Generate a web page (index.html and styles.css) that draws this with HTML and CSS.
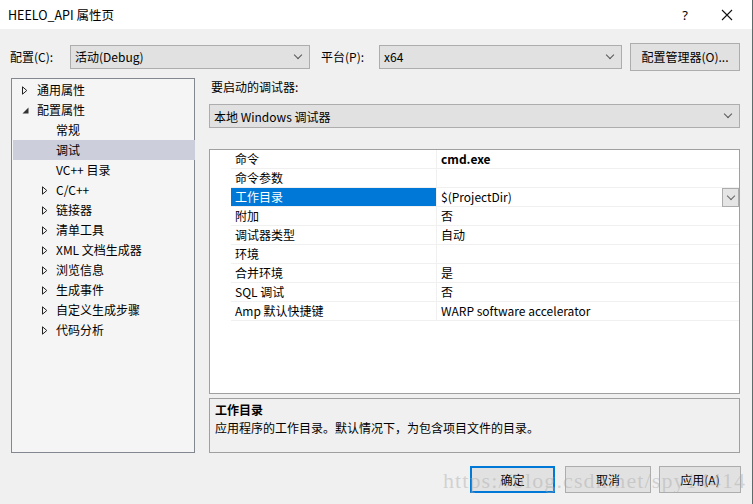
FILE: index.html
```html
<!DOCTYPE html>
<html lang="zh-CN">
<head>
    <meta charset="UTF-8">
    <title>HEELO_API 属性页</title>
    <link rel="stylesheet" href="styles.css">
</head>
<body>
<div class="dialog">
    <div class="titlebar">
        <span class="title">HEELO_API 属性页</span>
        <span class="help">?</span>
        <svg class="close" width="12" height="12" viewBox="0 0 12 12"><path d="M1 1 L11 11 M11 1 L1 11" stroke="#111" stroke-width="1.1" fill="none"/></svg>
    </div>

    <div class="config-row">
        <span class="lbl">配置(C):</span>
        <div class="combo combo-config"><span>活动(Debug)</span><i class="chev"></i></div>
        <span class="lbl lbl-plat">平台(P):</span>
        <div class="combo combo-plat"><span>x64</span><i class="chev"></i></div>
        <button class="btn btn-manager">配置管理器(O)...</button>
    </div>

    <div class="main">
        <div class="tree">
            <div class="node"><svg class="tri" width="6" height="9" viewBox="0 0 6 9"><path d="M0.5 0.8 L4.8 4.5 L0.5 8.2 Z" fill="none" stroke="#222"/></svg>通用属性</div>
            <div class="node"><svg class="tri" width="7" height="9" viewBox="0 0 7 9"><path d="M6.5 1.5 L6.5 7.5 L0.5 7.5 Z" fill="#333"/></svg>配置属性</div>
            <div class="node sub">常规</div>
            <div class="node sub selected">调试</div>
            <div class="node sub">VC++ 目录</div>
            <div class="node sub"><svg class="tri" width="6" height="9" viewBox="0 0 6 9"><path d="M0.5 0.8 L4.8 4.5 L0.5 8.2 Z" fill="none" stroke="#222"/></svg>C/C++</div>
            <div class="node sub"><svg class="tri" width="6" height="9" viewBox="0 0 6 9"><path d="M0.5 0.8 L4.8 4.5 L0.5 8.2 Z" fill="none" stroke="#222"/></svg>链接器</div>
            <div class="node sub"><svg class="tri" width="6" height="9" viewBox="0 0 6 9"><path d="M0.5 0.8 L4.8 4.5 L0.5 8.2 Z" fill="none" stroke="#222"/></svg>清单工具</div>
            <div class="node sub"><svg class="tri" width="6" height="9" viewBox="0 0 6 9"><path d="M0.5 0.8 L4.8 4.5 L0.5 8.2 Z" fill="none" stroke="#222"/></svg>XML 文档生成器</div>
            <div class="node sub"><svg class="tri" width="6" height="9" viewBox="0 0 6 9"><path d="M0.5 0.8 L4.8 4.5 L0.5 8.2 Z" fill="none" stroke="#222"/></svg>浏览信息</div>
            <div class="node sub"><svg class="tri" width="6" height="9" viewBox="0 0 6 9"><path d="M0.5 0.8 L4.8 4.5 L0.5 8.2 Z" fill="none" stroke="#222"/></svg>生成事件</div>
            <div class="node sub"><svg class="tri" width="6" height="9" viewBox="0 0 6 9"><path d="M0.5 0.8 L4.8 4.5 L0.5 8.2 Z" fill="none" stroke="#222"/></svg>自定义生成步骤</div>
            <div class="node sub"><svg class="tri" width="6" height="9" viewBox="0 0 6 9"><path d="M0.5 0.8 L4.8 4.5 L0.5 8.2 Z" fill="none" stroke="#222"/></svg>代码分析</div>
        </div>

        <div class="right">
            <div class="dbg-label">要启动的调试器:</div>
            <div class="combo combo-dbg"><span>本地 Windows 调试器</span><i class="chev"></i></div>

            <div class="grid">
                <div class="row"><div class="name">命令</div><div class="val bold">cmd.exe</div></div>
                <div class="row"><div class="name">命令参数</div><div class="val"></div></div>
                <div class="row active"><div class="name">工作目录</div><div class="val">$(ProjectDir)<span class="drop"><i class="chev"></i></span></div></div>
                <div class="row"><div class="name">附加</div><div class="val">否</div></div>
                <div class="row"><div class="name">调试器类型</div><div class="val">自动</div></div>
                <div class="row"><div class="name">环境</div><div class="val"></div></div>
                <div class="row"><div class="name">合并环境</div><div class="val">是</div></div>
                <div class="row"><div class="name">SQL 调试</div><div class="val">否</div></div>
                <div class="row"><div class="name">Amp 默认快捷键</div><div class="val">WARP software accelerator</div></div>
            </div>

            <div class="desc">
                <div class="desc-title">工作目录</div>
                <div class="desc-text">应用程序的工作目录。默认情况下，为包含项目文件的目录。</div>
            </div>
        </div>
    </div>

    <div class="buttons">
        <button class="btn btn-default">确定</button>
        <button class="btn btn-cancel">取消</button>
        <button class="btn btn-apply">应用(A)</button>
    </div>

    <div class="watermark">https://blog.csdn.net/spy14414</div>
</div>
</body>
</html>
```

FILE: styles.css
```css
body {
    margin: 0;
    font-family: "Noto Sans CJK SC", "Noto Sans", sans-serif;
    font-size: 12px;
    color: #000;
    background: #f0f0f0;
}

.dialog {
    position: relative;
    width: 752px;
    height: 504px;
    background: #f0f0f0;
    border-right: 1px solid #5b6b6b;
    overflow: hidden;
}

/* title bar */
.titlebar {
    height: 29px;
    background: #fff;
    display: flex;
    align-items: center;
    padding-left: 8px;
    font-size: 12.5px;
}

.title {
    flex: 1;
}

.help {
    font-family: "Noto Sans", sans-serif;
    font-size: 13px;
    margin-right: 33px;
}

.close {
    margin-right: 19px;
}

/* config row */
.config-row {
    display: flex;
    align-items: center;
    padding: 13px 0 0 10px;
    height: 29px;
}

.lbl {
    width: 60px;
}

.lbl-plat {
    width: 58px;
    margin-left: 11px;
}

.combo {
    height: 22px;
    border: 1px solid #adadad;
    background: #e1e1e1;
    display: flex;
    align-items: center;
    padding-left: 4px;
    box-sizing: content-box;
}

.combo span {
    flex: 1;
}

.combo-config {
    width: 234px;
}

.combo-plat {
    width: 237px;
}

.chev {
    display: inline-block;
    width: 5px;
    height: 5px;
    border-right: 1px solid #555;
    border-bottom: 1px solid #555;
    transform: rotate(45deg);
    margin: 0 8px 4px 0;
}

.btn {
    font-family: inherit;
    font-size: 12px;
    color: #000;
    background: #e1e1e1;
    border: 1px solid #adadad;
    padding: 0;
}

.btn-manager {
    width: 110px;
    height: 28px;
    margin-left: 8px;
}

/* main */
.main {
    display: flex;
    margin-top: 7px;
    height: 375px;
}

.tree {
    width: 184px;
    margin-left: 11px;
    border: 1px solid #828790;
    background: #f5f5f5;
    padding: 1px;
    box-sizing: border-box;
}

.node {
    height: 20px;
    line-height: 20px;
    position: relative;
    padding-left: 24px;
    width: 182px;
    box-sizing: border-box;
}

.node.sub {
    padding-left: 43px;
}

.node.selected {
    background: #cccedb;
}

.tri {
    position: absolute;
    top: 6px;
    left: 9px;
}

.sub .tri {
    left: 29px;
}

.right {
    width: 531px;
    margin-left: 14px;
}

.dbg-label {
    line-height: 16px;
    margin: 1px 0 0 2px;
}

.combo-dbg {
    width: 525px;
    margin-top: 9px;
}

/* property grid */
.grid {
    margin-top: 21px;
    height: 245px;
    border: 1px solid #a0a0a0;
    background: #fff;
    box-sizing: border-box;
    padding-left: 21px;
}

.row {
    display: flex;
    height: 19px;
    border-bottom: 1px solid #f0f0f0;
    box-sizing: border-box;
    line-height: 18px;
}

.name {
    width: 206px;
    padding-left: 4px;
    box-sizing: border-box;
    border-right: 1px solid #f0f0f0;
}

.val {
    flex: 1;
    padding-left: 4px;
    position: relative;
}

.bold {
    font-weight: bold;
}

.row.active .name {
    background: #0078d7;
    color: #fff;
}

.drop {
    position: absolute;
    right: 0;
    top: 0;
    width: 15px;
    height: 17px;
    background: #e5e5e5;
    border: 1px solid #acacac;
    display: flex;
    align-items: center;
    justify-content: center;
}

.drop .chev {
    margin: 0 0 3px 0;
    border-color: #666;
}

/* description */
.desc {
    margin-top: 4px;
    height: 55px;
    border: 1px solid #a0a0a0;
    box-sizing: border-box;
    padding: 2px 5px;
    line-height: 18px;
}

.desc-title {
    font-weight: bold;
}

/* bottom buttons */
.buttons {
    display: flex;
    padding: 13px 0 0 470px;
}

.buttons .btn {
    height: 27px;
}

.btn-default {
    width: 85px;
    border: 2px solid #0078d7;
}

.btn-cancel {
    width: 86px;
    margin-left: 10px;
}

.btn-apply {
    width: 82px;
    margin-left: 8px;
}

.watermark {
    position: absolute;
    left: 443px;
    top: 468px;
    font-family: "Liberation Serif", serif;
    font-size: 22px;
    letter-spacing: 1.1px;
    white-space: nowrap;
    color: rgba(170, 170, 170, 0.45);
    pointer-events: none;
}
```
